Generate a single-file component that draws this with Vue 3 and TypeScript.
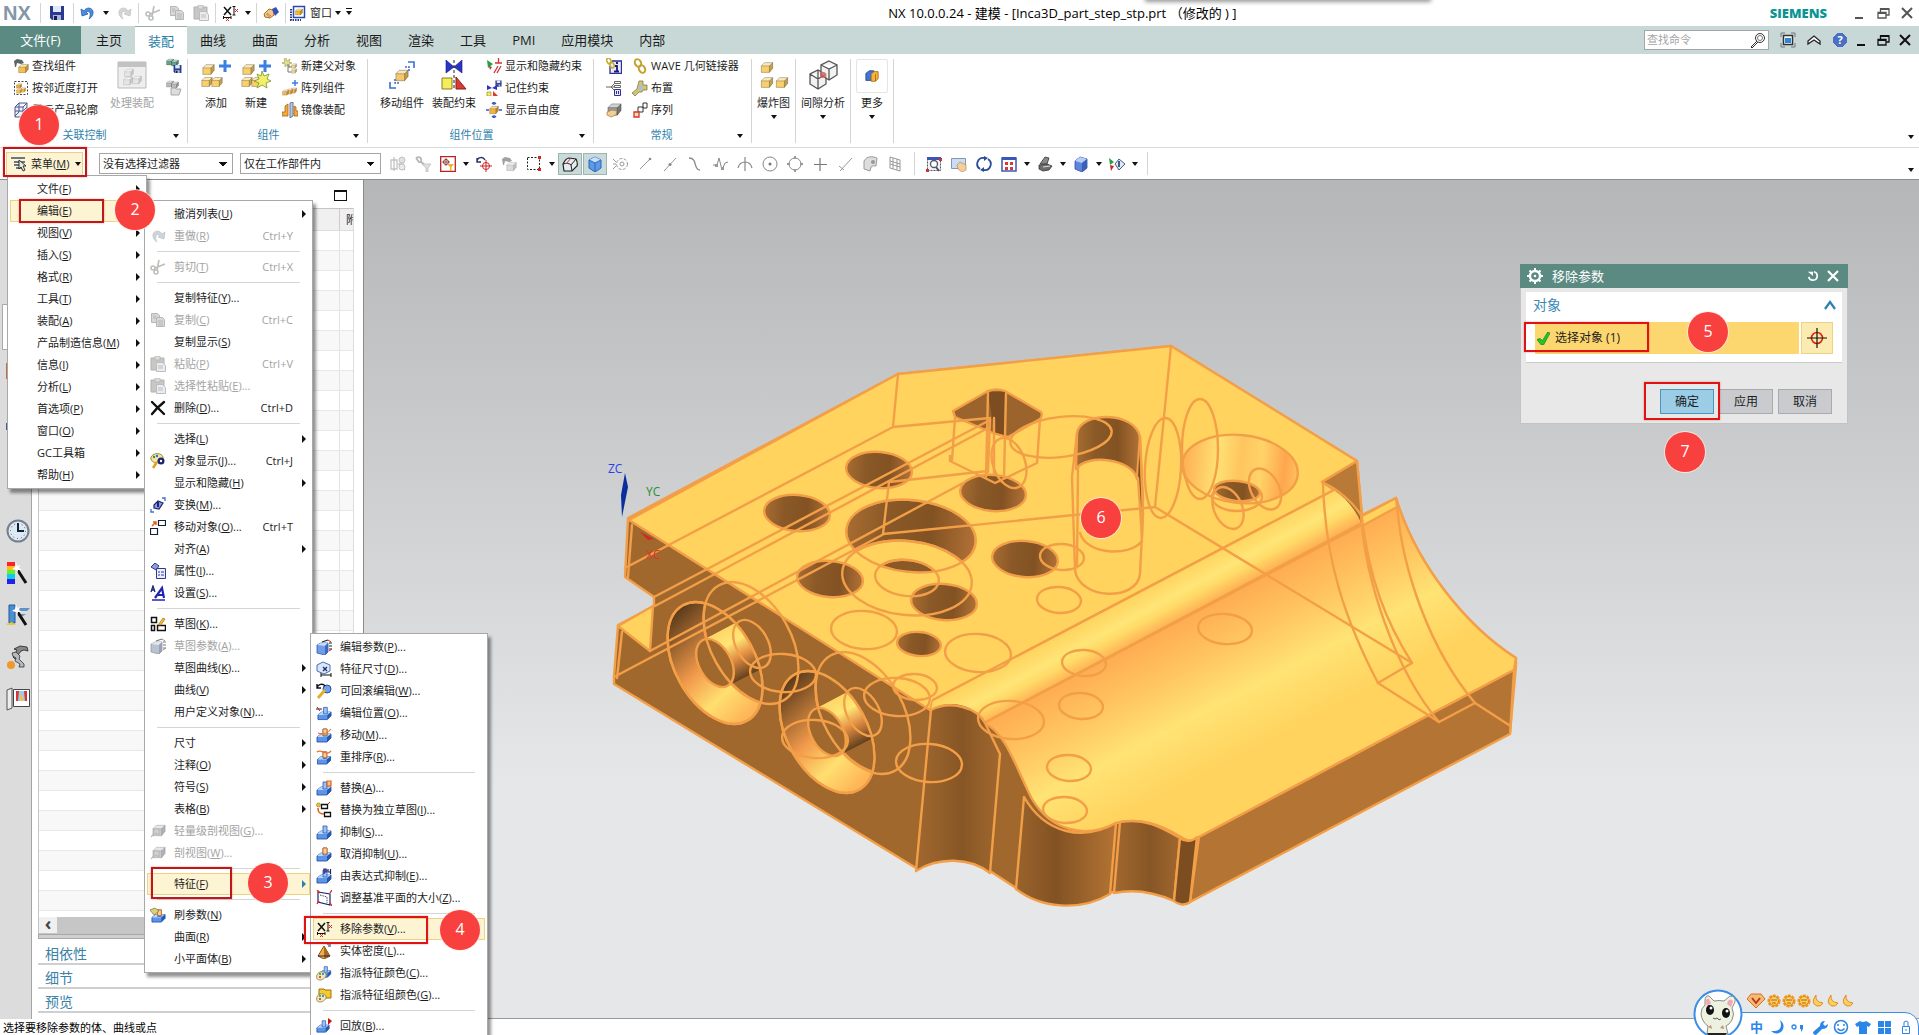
<script setup lang="ts">
interface MenuItem {
  text?: string
  hotkey?: string
  tail?: string
  icon?: string
  keys?: string
  sub?: boolean
  off?: boolean
  active?: boolean
}
interface Ring {
  x: number
  y: number
  rx: number
  ry: number
  a?: number
}

const tabs: string[] = ['主页', '装配', '曲线', '曲面', '分析', '视图', '渲染', '工具', 'PMI', '应用模块', '内部']

const mainMenu: MenuItem[] = [
  { text: '文件', hotkey: 'F', sub: true },
  { text: '编辑', hotkey: 'E', sub: true, active: true },
  { text: '视图', hotkey: 'V', sub: true },
  { text: '插入', hotkey: 'S', sub: true },
  { text: '格式', hotkey: 'R', sub: true },
  { text: '工具', hotkey: 'T', sub: true },
  { text: '装配', hotkey: 'A', sub: true },
  { text: '产品制造信息', hotkey: 'M', sub: true },
  { text: '信息', hotkey: 'I', sub: true },
  { text: '分析', hotkey: 'L', sub: true },
  { text: '首选项', hotkey: 'P', sub: true },
  { text: '窗口', hotkey: 'O', sub: true },
  { text: 'GC工具箱', sub: true },
  { text: '帮助', hotkey: 'H', sub: true },
]

const editMenu: MenuItem[] = [
  { text: '撤消列表', hotkey: 'U', sub: true },
  { text: '重做', hotkey: 'R', keys: 'Ctrl+Y', icon: 'redo', off: true },
  {},
  { text: '剪切', hotkey: 'T', keys: 'Ctrl+X', icon: 'cut', off: true },
  {},
  { text: '复制特征', hotkey: 'Y', tail: '...' },
  { text: '复制', hotkey: 'C', keys: 'Ctrl+C', icon: 'copy', off: true },
  { text: '复制显示', hotkey: 'S' },
  { text: '粘贴', hotkey: 'P', keys: 'Ctrl+V', icon: 'paste', off: true },
  { text: '选择性粘贴', hotkey: 'E', tail: '...', icon: 'paste', off: true },
  { text: '删除', hotkey: 'D', tail: '...', keys: 'Ctrl+D', icon: 'delete' },
  {},
  { text: '选择', hotkey: 'L', sub: true },
  { text: '对象显示', hotkey: 'J', tail: '...', keys: 'Ctrl+J', icon: 'palette' },
  { text: '显示和隐藏', hotkey: 'H', sub: true },
  { text: '变换', hotkey: 'M', tail: '...', icon: 'transform' },
  { text: '移动对象', hotkey: 'O', tail: '...', keys: 'Ctrl+T', icon: 'moveobj' },
  { text: '对齐', hotkey: 'A', sub: true },
  { text: '属性', hotkey: 'I', tail: '...', icon: 'props' },
  { text: '设置', hotkey: 'S', tail: '...', icon: 'fonts' },
  {},
  { text: '草图', hotkey: 'K', tail: '...', icon: 'sketch' },
  { text: '草图参数', hotkey: 'A', tail: '...', icon: 'param', off: true },
  { text: '草图曲线', hotkey: 'K', tail: '...', sub: true },
  { text: '曲线', hotkey: 'V', sub: true },
  { text: '用户定义对象', hotkey: 'N', tail: '...' },
  {},
  { text: '尺寸', sub: true },
  { text: '注释', hotkey: 'O', sub: true },
  { text: '符号', hotkey: 'S', sub: true },
  { text: '表格', hotkey: 'B', sub: true },
  { text: '轻量级剖视图', hotkey: 'G', tail: '...', icon: 'section', off: true },
  { text: '剖视图', hotkey: 'W', tail: '...', icon: 'section', off: true },
  {},
  { text: '特征', hotkey: 'F', sub: true, active: true },
  {},
  { text: '刷参数', hotkey: 'N', icon: 'brush' },
  { text: '曲面', hotkey: 'R', sub: true },
  { text: '小平面体', hotkey: 'B', sub: true },
]

const featureMenu: MenuItem[] = [
  { text: '编辑参数', hotkey: 'P', tail: '...', icon: 'param' },
  { text: '特征尺寸', hotkey: 'D', tail: '...', icon: 'fdim' },
  { text: '可回滚编辑', hotkey: 'W', tail: '...', icon: 'rollback' },
  { text: '编辑位置', hotkey: 'O', tail: '...', icon: 'fpos' },
  { text: '移动', hotkey: 'M', tail: '...', icon: 'fmove' },
  { text: '重排序', hotkey: 'R', tail: '...', icon: 'freorder' },
  {},
  { text: '替换', hotkey: 'A', tail: '...', icon: 'freplace' },
  { text: '替换为独立草图', hotkey: 'I', tail: '...', icon: 'indep' },
  { text: '抑制', hotkey: 'S', tail: '...', icon: 'fblue' },
  { text: '取消抑制', hotkey: 'U', tail: '...', icon: 'forange' },
  { text: '由表达式抑制', hotkey: 'E', tail: '...', icon: 'fexpr' },
  { text: '调整基准平面的大小', hotkey: 'Z', tail: '...', icon: 'plane' },
  {},
  { text: '移除参数', hotkey: 'V', tail: '...', icon: 'xparam', active: true },
  { text: '实体密度', hotkey: 'L', tail: '...', icon: 'density' },
  { text: '指派特征颜色', hotkey: 'C', tail: '...', icon: 'fcolor' },
  { text: '指派特征组颜色', hotkey: 'G', tail: '...', icon: 'gcolor' },
  {},
  { text: '回放', hotkey: 'B', tail: '...', icon: 'play' },
]

const menus = [
  { name: 'main', label: '菜单', items: mainMenu },
  { name: 'edit', label: '编辑', items: editMenu },
  { name: 'feature', label: '特征', items: featureMenu },
]

const snapTools: string[] = ['snapall', 'line1', 'line2', 'curve', 'spline', 'arcx', 'circdot', 'circ4', 'plus', 'slash', 'facept', 'gridpt']

const badges = [
  { n: 1, x: 39, y: 125 },
  { n: 2, x: 135, y: 210 },
  { n: 3, x: 268, y: 883 },
  { n: 4, x: 460, y: 930 },
]
const frames = [
  { x: 3, y: 147, w: 84, h: 30 },
  { x: 19, y: 199, w: 85, h: 24 },
  { x: 151, y: 867, w: 81, h: 32 },
  { x: 304, y: 916, w: 124, h: 28 },
]

const holes: Ring[] = [
  { x: 879, y: 470, rx: 33, ry: 18, a: 5 },
  { x: 797, y: 513, rx: 33, ry: 18, a: 5 },
  { x: 993, y: 493, rx: 33, ry: 18, a: 5 },
  { x: 830, y: 579, rx: 33, ry: 18, a: 5 },
  { x: 1025, y: 559, rx: 33, ry: 18, a: 5 },
  { x: 944, y: 602, rx: 33, ry: 18, a: 5 },
  { x: 919, y: 644, rx: 22, ry: 12, a: 5 },
]
const rings: Ring[] = [
  { x: 864, y: 630, rx: 33, ry: 19, a: 4 },
  { x: 978, y: 653, rx: 33, ry: 19, a: 4 },
  { x: 1059, y: 600, rx: 22, ry: 13, a: 4 },
  { x: 1062, y: 557, rx: 22, ry: 13, a: 4 },
  { x: 1225, y: 629, rx: 27, ry: 15, a: 5 },
  { x: 1084, y: 663, rx: 22, ry: 13, a: 4 },
  { x: 1081, y: 706, rx: 22, ry: 13, a: 4 },
  { x: 1011, y: 720, rx: 33, ry: 19, a: 4 },
  { x: 1069, y: 768, rx: 22, ry: 13, a: 4 },
  { x: 1065, y: 810, rx: 22, ry: 13, a: 4 },
  { x: 915, y: 687, rx: 22, ry: 13, a: 4 },
  { x: 897, y: 697, rx: 33, ry: 19, a: 4 },
  { x: 929, y: 763, rx: 33, ry: 19, a: 4 },
  { x: 815, y: 739, rx: 33, ry: 19, a: 4 },
  { x: 783, y: 673, rx: 33, ry: 19, a: 4 },
  { x: 907, y: 578, rx: 65, ry: 37, a: 6 },
  { x: 907, y: 578, rx: 32, ry: 18, a: 6 },
  { x: 1061, y: 437, rx: 51, ry: 20, a: -7 },
  { x: 1163, y: 468, rx: 18, ry: 50, a: 3 },
  { x: 1200, y: 449, rx: 18, ry: 50, a: 0 },
  { x: 1228, y: 508, rx: 14, ry: 22, a: -24 },
  { x: 1265, y: 489, rx: 14, ry: 22, a: -28 },
  { x: 1009, y: 463, rx: 16, ry: 26, a: -20 },
  { x: 751, y: 643, rx: 40, ry: 66, a: -29 },
  { x: 863, y: 713, rx: 40, ry: 66, a: -29 },
  { x: 752, y: 644, rx: 16, ry: 26, a: -29 },
  { x: 863, y: 712, rx: 16, ry: 26, a: -29 },
]
const bores = [
  { x: 0, y: 0 },
  { x: 112, y: 69 },
]
</script>

<template>
  <div class="app">
    <svg class="defs" aria-hidden="true">
      <symbol id="cube" viewBox="0 0 16 16"><path d="M1 6l4-4h10v7l-4 5H1z" fill="currentColor" /><path d="M1 6l4-4h10l-4 4z" fill="#fff" opacity=".55" /><path d="M11 6l4-4v7l-4 5z" fill="#000" opacity=".22" /><path d="M1 6l4-4h10v7l-4 5H1zM1 6h10l4-4M11 6v8" fill="none" stroke="#000" stroke-opacity=".3" /></symbol>
      <symbol id="save" viewBox="0 0 16 16"><path d="M1 1h14v14H3l-2-2z" fill="#2b3a8f" /><path d="M4 1h8v6H4z" fill="#dfe9f7" /><path d="M4 10h8v5H4z" fill="#a9b7dd" /><path d="M5 11h3v4H5z" fill="#141c50" /></symbol>
      <symbol id="undo" viewBox="0 0 16 16"><path d="M1 4l1 7 6-2-2-2c3-2 6 1 3 7 5-3 6-10 0-11-2 0-4 1-5 3z" fill="#4b8ede" stroke="#1d4f9c" stroke-width=".7" /></symbol>
      <symbol id="redo" viewBox="0 0 16 16"><path d="M15 4l-1 7-6-2 2-2C7 5 4 8 7 14 2 11 1 4 7 3c2 0 4 1 5 3z" fill="#a9bacb" stroke="#8a9aaa" stroke-width=".7" /></symbol>
      <symbol id="cut" viewBox="0 0 16 16"><g fill="none" stroke="#98937a" stroke-width="1.6"><path d="M9 1L7 11M15 5L5 9" /><circle cx="6" cy="13" r="2" /><circle cx="3" cy="9" r="2" /></g></symbol>
      <symbol id="copy" viewBox="0 0 16 16"><g fill="#b9bfcc" stroke="#808898"><path d="M1.500 1.500h6l2 2v7h-8z" /><path d="M6.500 5.500h6l2 2v7h-8z" /></g><path d="M8 9h5M8 11h5M8 13h5M3 4h3M3 6h3" stroke="#808898" /></symbol>
      <symbol id="paste" viewBox="0 0 16 16"><path d="M1 2h13v12H1z" fill="#a6a295" stroke="#858070" /><path d="M5 0h5v4H5z" fill="#c9c6bd" stroke="#858070" stroke-width=".7" /><path d="M6.500 6.500h6l3 3v6h-9z" fill="#dbe0ea" stroke="#8a93a5" /><path d="M8 10h5M8 12h5" stroke="#8a93a5" /></symbol>
      <symbol id="xparam" viewBox="0 0 16 16"><path d="M2 2l7 8M9 2l-7 8" stroke="#111" stroke-width="1.500" /><path d="M12 1v9M10.500 1.500h3M10.500 10h3M1 12.500h8M1.500 11v3M9 11v3" stroke="#111" fill="none" /><path d="M13 4l3 3M16 4l-3 3M4 13l3 3M7 13l-3 3" stroke="#d22" /></symbol>
      <symbol id="hand" viewBox="0 0 16 16"><path d="M1 9l5-5 4 1 1 5-4 3-5-1z" fill="#f3c98b" stroke="#a86c2a" /><path d="M9 4l4-2 3 5-4 4z" fill="#3a4fb5" /><path d="M3 9l4 3M4 8l4 3" stroke="#a86c2a" stroke-width=".7" /></symbol>
      <symbol id="windows" viewBox="0 0 16 16"><path d="M1 4v11h10" fill="none" stroke="#2b3a8f" stroke-dasharray="1.500 1" stroke-width="2" /><path d="M3.500 1.500h11v11h-11z" fill="#fff" stroke="#2b4ab0" stroke-width="1.500" /><use href="#cube" x="5" y="3" width="8" height="8" color="#f5b82c" /></symbol>
      <symbol id="find" viewBox="0 0 16 16"><use href="#cube" x="5" y="5" width="11" height="11" color="#f5c04c" /><path d="M1 3l3-2 5 1 2 3-3 1-4-1-1 4H2z" fill="#5c6468" /></symbol>
      <symbol id="prox" viewBox="0 0 16 16"><path d="M1.500 1.500h13v13h-13z" fill="none" stroke="#444" stroke-dasharray="2 1.500" /><use href="#cube" x="3" y="3" width="6" height="6" color="#f0a83c" /><use href="#cube" x="7" y="7" width="6" height="6" color="#f5c04c" /><use href="#cube" x="3" y="8" width="6" height="6" color="#f5c04c" /></symbol>
      <symbol id="outline" viewBox="0 0 16 16"><path d="M2 5l4-4h8v9l-4 5H2zM2 5h8l4-4M10 5v10M2 9h8l4-4M6 1v9l-4 4" fill="#dfe3f3" fill-opacity=".6" stroke="#4b5594" /></symbol>
      <symbol id="asm" viewBox="0 0 30 30"><path d="M1 2h28v26H1z" fill="#e4e4e4" stroke="#8b8b8b" /><path d="M1 2h28v5H1z" fill="#9b9b9b" /><use href="#cube" x="7" y="8" width="10" height="10" color="#d5d5d5" /><use href="#cube" x="6" y="16" width="10" height="10" color="#d5d5d5" /><use href="#cube" x="15" y="15" width="10" height="10" color="#d5d5d5" /></symbol>
      <symbol id="asmsave" viewBox="0 0 16 16"><use href="#cube" x="0" y="0" width="8" height="8" color="#62a38f" /><use href="#cube" x="5" y="1" width="8" height="8" color="#62a38f" /><use href="#save" x="7" y="6" width="9" height="10" /></symbol>
      <symbol id="asmopen" viewBox="0 0 16 16"><use href="#cube" x="0" y="0" width="8" height="8" color="#bbb" /><use href="#cube" x="5" y="1" width="8" height="8" color="#bbb" /><path d="M5 15V8h4l1 1h5l-2 6z" fill="#ddd" stroke="#aaa" /></symbol>
      <symbol id="stack" viewBox="0 0 30 30"><g color="#f8cf68"><use href="#cube" x="1" y="3" width="13" height="13" /><use href="#cube" x="0" y="16" width="12" height="12" /><use href="#cube" x="10" y="16" width="12" height="12" /></g></symbol>
      <symbol id="add" viewBox="0 0 30 30"><use href="#stack" width="30" height="30" /><path d="M24 0v12M18 6h12" stroke="#3b7fe0" stroke-width="3" /></symbol>
      <symbol id="new" viewBox="0 0 30 30"><use href="#stack" width="30" height="30" /><path d="M24 0v12M18 6h12" stroke="#3b7fe0" stroke-width="3" /><path d="M21 11l2 5 5-2-2 5 4 2-5 2 1 5-5-3-5 3 2-5-5-2 5-2-2-5 4 2z" fill="#f4ef6a" stroke="#75952a" stroke-width=".8" /></symbol>
      <symbol id="parent" viewBox="0 0 16 16"><path d="M4 0l1 3 3-2-1 3 3 1-3 1 1 3-3-2-2 2V6L0 5l3-1-1-3z" fill="#e3e08c" stroke="#9a9a48" stroke-width=".6" /><path d="M6 6v8h4M6 9h4" fill="none" stroke="#777" /><use href="#cube" x="9" y="5" width="6" height="6" color="#e8d79a" /><use href="#cube" x="9" y="10" width="6" height="6" color="#e8d79a" /></symbol>
      <symbol id="array" viewBox="0 0 16 16"><g color="#f4b65a"><use href="#cube" x="8" y="7" width="7" height="7" /><use href="#cube" x="4" y="8" width="7" height="7" /><use href="#cube" x="0" y="9" width="7" height="7" /></g><path d="M13 0v6M10 3h6" stroke="#3b7fe0" stroke-width="1.500" /></symbol>
      <symbol id="mirror" viewBox="0 0 16 16"><path d="M8 1l3-1v14l-3 2z" fill="#bdc7dd" stroke="#6b7894" /><path d="M0 10h3V4l3-2v12H0zM12 4l2 1v4h2v5h-4z" fill="#f3a93e" stroke="#a4641a" stroke-width=".8" /></symbol>
      <symbol id="movecomp" viewBox="0 0 30 30"><use href="#cube" x="8" y="8" width="14" height="15" color="#f6c86c" /><g fill="none" stroke="#3b6fd0" stroke-width="1.600"><path d="M21 2h6v6M3 22v6h6" /><path d="M18 7h4v4M8 19v4h4" stroke-dasharray="2 1" /></g></symbol>
      <symbol id="constrain" viewBox="0 0 30 30"><path d="M7 0v13l8-6zM23 0v13l-8-6z" fill="#2a35c4" stroke="#111a77" stroke-width=".6" /><path d="M15 0v30" stroke="#222" stroke-dasharray="3 2" /><path d="M3 18h10v11H3z" fill="#f4ee5c" stroke="#8a7d1e" /><path d="M17 29V17l10 12z" fill="#d93a34" stroke="#8c1d19" /></symbol>
      <symbol id="showcon" viewBox="0 0 16 16"><path d="M1 2l6 4-5 4z" fill="#24a148" /><path d="M3 8l1 4 2-3z" fill="#c22" /><path d="M9 5h7M12.500 0v5M8 15l4-7M11 15l4-7" stroke="#d2333a" stroke-width="1.300" /></symbol>
      <symbol id="remember" viewBox="0 0 16 16"><use href="#save" x="9" y="0" width="7" height="7" /><path d="M1 5v5l5-2zM11 5v5L6 8z" fill="#2a35c4" /><path d="M1 12h4v4H1z" fill="#f4ee5c" stroke="#8a7d1e" stroke-width=".6" /><path d="M7 16v-5l5 5z" fill="#d93a34" /></symbol>
      <symbol id="dof" viewBox="0 0 16 16"><use href="#cube" x="3" y="3" width="10" height="10" color="#f6b23c" /><path d="M8 0v3M8 13v3M0 8h3M13 8h3M6 2l2-2 2 2M6 14l2 2 2-2" stroke="#2f5bbf" fill="none" stroke-width="1.300" /></symbol>
      <symbol id="info" viewBox="0 0 16 16"><path d="M6 3h9.500v12.500H4V8" fill="#e8eafb" stroke="#2f2f8f" stroke-width="1.300" /><path d="M9 8h2v5M8 13.500h5M10 5h2" stroke="#1a1a80" stroke-width="1.800" fill="none" /><g fill="none" stroke="#c9a92c" stroke-width="1.500"><ellipse cx="3" cy="3" rx="2" ry="3" transform="rotate(-25 3 3)" /><ellipse cx="6" cy="7" rx="2" ry="3" transform="rotate(-25 6 7)" /></g></symbol>
      <symbol id="tree" viewBox="0 0 16 16"><path d="M0 7h5l4-4M5 7h4M5 7l4 4" fill="none" stroke="#666" /><path d="M8.500 1.500h6v2h-6zM8.500 5.500h6v2h-6z" fill="#fff" stroke="#666" /><path d="M8.500 9.500h6v6h-6z" fill="#e8eafb" stroke="#2f2f8f" /><path d="M10.500 11v3M12.500 11v3" stroke="#2f2f8f" /></symbol>
      <symbol id="graybox" viewBox="0 0 16 16"><use href="#cube" x="1" y="0" width="15" height="15" color="#9a9a9a" /><path d="M1 10l5-2 5 1-1 4-5 2-4-2z" fill="#f0cf97" stroke="#a8793c" stroke-width=".7" /></symbol>
      <symbol id="link" viewBox="0 0 16 16"><g fill="none" stroke="#c4a12e" stroke-width="2"><ellipse cx="6" cy="5" rx="3" ry="4" transform="rotate(-25 6 5)" /><ellipse cx="10" cy="11" rx="3" ry="4" transform="rotate(-25 10 11)" /></g></symbol>
      <symbol id="arrange" viewBox="0 0 16 16"><path d="M7 1h4v4h4v5h-4l-1 2H7L3 16l-3-3 5-4z" fill="#cfc47a" stroke="#857c3c" stroke-width=".8" /><path d="M7 5h4v5H7z" fill="#a8bfe0" opacity=".8" /></symbol>
      <symbol id="seq" viewBox="0 0 16 16"><path d="M11 1h4v5h-4zM6 5h5v5H6z" fill="#fff" stroke="#333" /><path d="M2 10h5v5H2z" fill="#fbe4a0" stroke="#d2333a" stroke-width="1.300" /></symbol>
      <symbol id="explode" viewBox="0 0 30 30"><g color="#f8cf68"><use href="#cube" x="1" y="1" width="14" height="13" /><use href="#cube" x="1" y="16" width="14" height="13" /><use href="#cube" x="16" y="16" width="14" height="13" /></g></symbol>
      <symbol id="clear" viewBox="0 0 30 30"><path d="M10 10l8 4v10l-8 5-8-5V14zM2 14l8 5 8-5M10 19v10M10 10v9" fill="#f2f2f2" stroke="#555" stroke-width="1.300" /><path d="M21 1l8 4v10l-8 5-8-5V5zM13 5l8 4 8-4M21 9v11" fill="#ececec" fill-opacity=".7" stroke="#555" stroke-width="1.300" /><circle cx="15" cy="15" r="3" fill="#d9534f" opacity=".75" /></symbol>
      <symbol id="more" viewBox="0 0 16 16"><path d="M1 5l4-3h5v11H1z" fill="#3f74cf" stroke="#244c9c" /><path d="M7 6l3-3h5v8l-3 3H7z" fill="#f6b23c" stroke="#a96d16" /><path d="M12 6v8" stroke="#a96d16" /></symbol>
      <symbol id="menuico" viewBox="0 0 16 16"><path d="M0 2h14M3 6h11M3 9h8M5 12h6" stroke="#3d4d63" stroke-width="1.600" /><path d="M8 4v9l2-2 2 4 2-1-2-4h3z" fill="#e8e8e8" stroke="#222" stroke-width=".9" /></symbol>
      <symbol id="selfunnel" viewBox="0 0 16 16"><path d="M1 2c4-2 6 0 5 4l3 2M1 2l3 4 2 0" fill="none" stroke="#888" stroke-width="1.800" /><path d="M7 8h9l-3 4v4h-2v-4z" fill="#ccc" stroke="#888" stroke-width=".7" /></symbol>
      <symbol id="selcomp" viewBox="0 0 16 16"><path d="M1 4h6v9H1zM4 1v14M9 9l6 5M8 8h6" fill="none" stroke="#9a9a9a" stroke-width="1.300" /><circle cx="12" cy="4" r="3" fill="#ccc" stroke="#999" /><circle cx="12" cy="11" r="3" fill="#ddd" stroke="#999" /></symbol>
      <symbol id="selprio" viewBox="0 0 16 16"><path d="M.7.700h14.600v14.600H.700z" fill="#fff" stroke="#b22" stroke-width="1.300" /><circle cx="6" cy="6" r="2.500" fill="none" stroke="#833" /><path d="M6 2v8M2 6h8" stroke="#833" stroke-width=".8" /><path d="M7 8h7l-2.500 3v4h-1.500v-4z" fill="#f0b02c" /></symbol>
      <symbol id="selrot" viewBox="0 0 16 16"><path d="M1 6c0-5 6-6 8-2M1 2v4h4" fill="none" stroke="#26346b" stroke-width="1.400" /><circle cx="10" cy="10" r="3.500" fill="none" stroke="#c22" /><path d="M10 4v12M4 10h12" stroke="#c22" /></symbol>
      <symbol id="dash" viewBox="0 0 16 16"><path d="M1.500 1.500h12v12h-12z" fill="none" stroke="#222" stroke-dasharray="2 1.500" /><path d="M12 12h3v3h-3zM12 0h3v3h-3z" fill="#d22" /></symbol>
      <symbol id="hidecube" viewBox="0 0 16 16"><path d="M1 8c2-4 4-6 6-6l7 1q2 4 1 7l-5 5H2z" fill="#e6edf2" stroke="#222" stroke-width="1.200" /><path d="M1 8c3-1 6-1 8 1l5-6M9 9l1 6" fill="none" stroke="#222" /><path d="M4 8l5-6" stroke="#c33" /></symbol>
      <symbol id="bluecube" viewBox="0 0 16 16"><path d="M2 4l6-3 6 3v8l-6 4-6-4z" fill="#5b9bea" stroke="#2f66b8" /><path d="M2 4l6 3 6-3-6-3z" fill="#c7dffa" /><path d="M8 7v9M2 4l6 3 6-3" stroke="#2f66b8" fill="none" /></symbol>
      <symbol id="snapall" viewBox="0 0 16 16"><g fill="none" stroke="#999"><path d="M1 3l3 3M1 13l3-3M1 8h3" /><circle cx="10" cy="8" r="5.500" stroke-dasharray="3 1.500" /><circle cx="10" cy="8" r="2" /></g></symbol>
      <symbol id="line1" viewBox="0 0 16 16"><path d="M3 13L13 3" stroke="#999" /><circle cx="13" cy="3" r="1.300" fill="#888" /></symbol>
      <symbol id="line2" viewBox="0 0 16 16"><path d="M2 15L14 2" stroke="#999" /><circle cx="8" cy="8.500" r="1.500" fill="#888" /></symbol>
      <symbol id="curve" viewBox="0 0 16 16"><path d="M2 2c9 0 4 12 11 12" fill="none" stroke="#888" stroke-width="1.300" /></symbol>
      <symbol id="spline" viewBox="0 0 16 16"><path d="M1 9h4L7 2l3 12 3-7 3-1" fill="none" stroke="#888" /><path d="M3 8h3v3H3zM9 11h3v3H9z" fill="#999" /></symbol>
      <symbol id="arcx" viewBox="0 0 16 16"><path d="M1 12C3 4 13 4 15 12M8 1v14" fill="none" stroke="#888" stroke-width="1.200" /></symbol>
      <symbol id="circdot" viewBox="0 0 16 16"><circle cx="8" cy="8" r="7" fill="none" stroke="#888" /><circle cx="8" cy="8" r="1.500" fill="#777" /></symbol>
      <symbol id="circ4" viewBox="0 0 16 16"><circle cx="8" cy="8" r="6" fill="none" stroke="#888" /><path d="M7 0h2v3H7zM7 13h2v3H7zM0 7h3v2H0zM13 7h3v2h-3z" fill="#999" /></symbol>
      <symbol id="plus" viewBox="0 0 16 16"><path d="M8 2v13M2 8.500h13" stroke="#777" stroke-width="1.200" /></symbol>
      <symbol id="slash" viewBox="0 0 16 16"><path d="M3 15L15 2M2 10l5 4" stroke="#999" /></symbol>
      <symbol id="facept" viewBox="0 0 16 16"><path d="M2 5c3-5 8-5 13-3l-1 8q-3-1-5 1l-1 4-6-2z" fill="#ddd" stroke="#999" /><circle cx="11" cy="6" r="2" fill="#999" /></symbol>
      <symbol id="gridpt" viewBox="0 0 16 16"><path d="M3 1l10 3v11L3 12zM3 5l10 3M3 8l10 3M6 2v11M10 3v11" fill="none" stroke="#999" /></symbol>
      <symbol id="fit" viewBox="0 0 16 16"><path d="M1.500 2.500h13v12h-13z" fill="#eef3fb" stroke="#555" stroke-dasharray="2 1" /><path d="M1 1h14v3H1z" fill="#3b57b5" /><circle cx="8" cy="8" r="3.500" fill="#fff" stroke="#556" stroke-width="1.300" /><path d="M10 11l3 4" stroke="#556" stroke-width="2" /><path d="M13 2h3v3h-3zM0 13h3v3H0z" fill="#c33" /></symbol>
      <symbol id="pan" viewBox="0 0 16 16"><path d="M.500 2.500h14v10H.500z" fill="#cbdcf5" stroke="#8894b0" /><path d="M6 9l3-3 6 3v5l-4 2-4-3z" fill="#f3cf9b" stroke="#b98a4a" stroke-width=".7" /></symbol>
      <symbol id="rotate" viewBox="0 0 16 16"><path d="M4 13A6 6 0 018 2M12 3a6 6 0 01-4 11" fill="none" stroke="#2c4d96" stroke-width="1.800" /><path d="M8 0l4 2-4 3zM8 11l-4 3 4 2z" fill="#2c4d96" /></symbol>
      <symbol id="layout" viewBox="0 0 16 16"><path d="M1 2h14v13H1z" fill="#fff" stroke="#3b57b5" stroke-width="1.500" /><path d="M1 1h14v3H1z" fill="#3b57b5" /><path d="M4 6h3v3H4zM9 6h3v3H9zM4 11h3v3H4zM9 11h3v3H9z" fill="#d43a34" /></symbol>
      <symbol id="orient" viewBox="0 0 16 16"><path d="M3 8l5-7 4 1-2 6z" fill="#8b8b8b" stroke="#333" stroke-width=".8" /><path d="M2 9l8-1 5 2-3 4-6 1-4-2z" fill="#6d6d6d" stroke="#333" stroke-width=".8" /><path d="M6 11l7-1" stroke="#ddd" /></symbol>
      <symbol id="style" viewBox="0 0 16 16"><path d="M2 5l5-4 7 2v9l-5 4-7-3z" fill="#5c86dd" stroke="#2f4fa5" stroke-width=".8" /><path d="M2 5l5-4 7 2-5 4z" fill="#b7cdf6" /><path d="M9 7l5-4v9l-5 4z" fill="#3c5fb8" /></symbol>
      <symbol id="edgeview" viewBox="0 0 16 16"><path d="M0 2l5 4-4 3z" fill="#24a148" /><path d="M1 9l4 1-3 5z" fill="#c22" /><path d="M6 8l4-5 6 5-6 6z" fill="#dfe8f3" stroke="#445a88" /><path d="M10 5v6" stroke="#445a88" stroke-width="2" /></symbol>
      <symbol id="delete" viewBox="0 0 16 16"><path d="M2 2c4 4 8 8 12 12M14 2C9 6 6 9 2 14" stroke="#111" stroke-width="2.400" stroke-linecap="round" fill="none" /></symbol>
      <symbol id="palette" viewBox="0 0 16 16"><path d="M1 4c3-5 11-4 12 0s-4 3-5 4-1 3-3 2-5-3-4-6z" fill="#f6e4a0" stroke="#8c6b1e" stroke-width=".8" /><circle cx="4" cy="4" r="1.200" fill="#2a9a4a" /><circle cx="7" cy="3" r="1.200" fill="#2f6be0" /><circle cx="11" cy="8" r="3.500" fill="#1c2470" /><circle cx="11" cy="8" r="1.200" fill="#fff" /><path d="M3 15l4-6" stroke="#e0a020" stroke-width="2.500" /></symbol>
      <symbol id="transform" viewBox="0 0 16 16"><path d="M4 8l4-4 5 2-4 6-5-1z" fill="#8f9ed8" stroke="#1c2470" stroke-width="1.200" /><path d="M8 5v5" stroke="#1c2470" stroke-width="2" /><path d="M12 1h3v3M1 12v3h3" fill="none" stroke="#3b6fd0" stroke-width="1.300" /></symbol>
      <symbol id="moveobj" viewBox="0 0 16 16"><path d="M8.500 1.500h7v5h-7zM.500 9.500h7v6h-7z" fill="#fff" stroke="#123" stroke-width="1.200" /><path d="M2 7l4-4M3 3h3v3" stroke="#e0601c" stroke-width="1.500" fill="none" /></symbol>
      <symbol id="props" viewBox="0 0 16 16"><path d="M1 4l4-4 4 3-3 4z" fill="#8f9ed8" stroke="#2a3a8f" /><path d="M6.500 5.500h9v10h-9z" fill="#eef" stroke="#2a3a8f" /><path d="M8 9h2M11 9h3M8 12h2M11 12h3" stroke="#2a3a8f" /></symbol>
      <symbol id="fonts" viewBox="0 0 16 16"><path d="M1 7l2-6 2 6M1.500 5h3" fill="none" stroke="#1c2470" stroke-width="1.300" /><path d="M5 13l7-10 2 10M8 10h5" fill="none" stroke="#2024b0" stroke-width="2.200" /><path d="M2 15h13" stroke="#2024b0" stroke-width="1.500" /></symbol>
      <symbol id="sketch" viewBox="0 0 16 16"><path d="M1.500 1.500h5v5h-5zM1.500 9.500h3v5h-3zM7.500 9.500h8v5h-8z" fill="none" stroke="#111" stroke-width="1.500" /><path d="M8 9l5-7 2 1-4 6z" fill="#f0c02c" stroke="#9a5a10" stroke-width=".6" /></symbol>
      <symbol id="param" viewBox="0 0 16 16"><path d="M1 6l4-2h7v9l-3 3-8-2z" fill="#6f9de8" stroke="#2a58b0" stroke-width=".8" /><path d="M1 6l4-2h7l-3 3z" fill="#c4dafa" /><path d="M9 7l3-3v9l-3 3z" fill="#3b69c4" /><path d="M6 3l6-2M13 4h3M13 7h3M13 10h3" stroke="#222" stroke-width="1.200" /><path d="M12 1l3 2M13 12l3-2" stroke="#d22" /></symbol>
      <symbol id="section" viewBox="0 0 16 16"><use href="#cube" x="2" y="0" width="14" height="15" color="#a3a7ae" /><path d="M1 14l5-4 3 2V6H4v4z" fill="#b9b49c" stroke="#8c8870" /></symbol>
      <symbol id="fblue" viewBox="0 0 16 16"><path d="M1 10l4-3h10v4l-4 4H1z" fill="#5b95ea" stroke="#1d449c" stroke-width=".8" /><path d="M1 10l4-3h10l-4 3z" fill="#b9d5f9" /><path d="M11 10l4-3v4l-4 4z" fill="#2657b4" /><path d="M7 2h4v7H7z" fill="#9bc2f5" stroke="#2a58b0" stroke-width=".8" /></symbol>
      <symbol id="forange" viewBox="0 0 16 16"><use href="#fblue" width="16" height="16" /><path d="M7 2h4v6H7z" fill="#f9d0a0" stroke="#d8701e" stroke-width="1" /></symbol>
      <symbol id="brush" viewBox="0 0 16 16"><use href="#forange" x="1" y="1" width="15" height="15" /><path d="M0 3l5-2 4 3-5 4z" fill="#d8d27a" stroke="#77702a" stroke-width=".7" /></symbol>
      <symbol id="fdim" viewBox="0 0 16 16"><path d="M1 4l6-3 7 3v6l-6 3-7-3z" fill="#d8e6fa" stroke="#4a6fb8" /><path d="M7 6l4 4M11 6l-4 4" stroke="#1c2c60" stroke-width="1.200" /><path d="M5 14h10M5 12v4M15 12v4" stroke="#111" /></symbol>
      <symbol id="rollback" viewBox="0 0 16 16"><circle cx="11" cy="6" r="4" fill="#6fa0ea" stroke="#234f9f" /><path d="M2 15l7-8" stroke="#e0b02c" stroke-width="3" /><path d="M1 5c1-4 6-5 8-2M1 1v4h4" fill="none" stroke="#112" stroke-width="1.400" /></symbol>
      <symbol id="fpos" viewBox="0 0 16 16"><use href="#fblue" x="1" width="15" height="16" /><path d="M0 4h6" stroke="#222" /><path d="M1 2l3 4" stroke="#c22" /></symbol>
      <symbol id="fmove" viewBox="0 0 16 16"><use href="#forange" width="16" height="16" /><path d="M2 6c5 2 9 1 13-4" fill="none" stroke="#e8762a" stroke-width="1.200" /></symbol>
      <symbol id="freorder" viewBox="0 0 16 16"><use href="#forange" y="1" width="16" height="15" /><path d="M1 3c4-4 9 5 14-1" fill="none" stroke="#e8762a" stroke-width="1.400" /></symbol>
      <symbol id="freplace" viewBox="0 0 16 16"><use href="#fblue" width="16" height="16" /><path d="M11 1h4v5h-4z" fill="#f8c08a" stroke="#e0601c" stroke-width="1.200" /></symbol>
      <symbol id="indep" viewBox="0 0 16 16"><path d="M5.500 2.500h6v4h-6zM8.500 10.500h6v4h-6z" fill="#fff" stroke="#111" stroke-width="1.300" /><circle cx="2.500" cy="3" r="2" fill="#e8c83c" stroke="#8a701a" stroke-width=".6" /><path d="M2 6c0 5 2 6 6 6" fill="none" stroke="#e0601c" stroke-width="1.600" /><path d="M12 2l2-2" stroke="#c22" /></symbol>
      <symbol id="fexpr" viewBox="0 0 16 16"><use href="#fblue" width="16" height="16" /><path d="M8 6V1h2v3H8M12 1v3h3M14.500 1v5" fill="none" stroke="#1c2470" stroke-width="1.200" /></symbol>
      <symbol id="plane" viewBox="0 0 16 16"><path d="M2 2l12 2v11L2 12z" fill="#fff" stroke="#1c2470" stroke-width="1.200" /><path d="M4 5l7 2v6" fill="none" stroke="#444" stroke-dasharray="1.500 1" /><path d="M1 0l3 3M14 13l2 3M14 3l2-3M1 14l2-3" stroke="#d22" stroke-width="1.300" /></symbol>
      <symbol id="density" viewBox="0 0 16 16"><path d="M2 13l6-10 6 10-6 3z" fill="#f4b23c" stroke="#8c5310" /><path d="M8 3v13l6-3z" fill="#a86b1e" /><path d="M11 1h4M12 3h3M2 13h12" stroke="#1c2470" /></symbol>
      <symbol id="fcolor" viewBox="0 0 16 16"><use href="#fblue" x="2" y="0" width="14" height="13" /><path d="M1 10c1-4 8-4 9-1s-3 6-6 6-4-2-3-5z" fill="#efe8bb" stroke="#777030" stroke-width=".7" /><circle cx="4" cy="9" r="1" fill="#2a2" /><circle cx="7" cy="9" r="1" fill="#26d" /><circle cx="4" cy="12" r="1" fill="#d22" /></symbol>
      <symbol id="gcolor" viewBox="0 0 16 16"><path d="M3 2h5l1 1h6v8H3z" fill="#f8c92c" stroke="#9a7412" /><path d="M1 10c1-4 8-4 9-1s-3 6-6 6-4-2-3-5z" fill="#efe8bb" stroke="#777030" stroke-width=".7" /><circle cx="4" cy="9" r="1" fill="#2a2" /><circle cx="7" cy="9" r="1" fill="#26d" /><circle cx="4" cy="12" r="1" fill="#d22" /></symbol>
      <symbol id="play" viewBox="0 0 16 16"><use href="#fblue" width="14" height="16" /><path d="M12 0l4 3-4 4z" fill="#c11" /></symbol>
      <symbol id="restore" viewBox="0 0 13 11"><path d="M3.500 4V1h8.500v6H9M1 4.500h8V10H1z" fill="none" stroke="currentColor" stroke-width="1.300" /><path d="M3 1h9M1 5h8" stroke="currentColor" stroke-width="2" /></symbol>
      <symbol id="close" viewBox="0 0 12 12"><path d="M1 1l10 10M11 1L1 11" stroke="currentColor" stroke-width="2" /></symbol>
    </svg>

    <header class="title">
      <span class="nx">NX</span><i class="sep"></i>
      <button class="ib wide" aria-label="保存"><svg><use href="#save" /></svg></button><i class="sep"></i>
      <button class="ib" aria-label="撤消"><svg><use href="#undo" /></svg></button><i class="tri"></i>
      <button class="ib" aria-label="重做"><svg class="dim"><use href="#redo" /></svg></button><i class="sep"></i>
      <button class="ib" aria-label="剪切"><svg class="dim"><use href="#cut" /></svg></button>
      <button class="ib" aria-label="复制"><svg class="dim"><use href="#copy" /></svg></button>
      <button class="ib" aria-label="粘贴"><svg class="dim"><use href="#paste" /></svg></button><i class="sep"></i>
      <button class="ib" aria-label="移除参数"><svg><use href="#xparam" /></svg></button><i class="tri"></i><i class="sep"></i>
      <button class="ib" aria-label="命令查找"><svg><use href="#hand" /></svg></button><i class="sep"></i>
      <button class="winbtn"><svg><use href="#windows" /></svg>窗口<i class="tri"></i></button><i class="tri bar"></i>
      <h1>NX 10.0.0.24 - 建模 - [Inca3D_part_step_stp.prt （修改的 ) ]</h1>
      <span class="brand">SIEMENS</span>
      <div class="winctl gray">
        <button aria-label="最小化"><i class="min"></i></button>
        <button aria-label="还原"><svg class="rs"><use href="#restore" /></svg></button>
        <button aria-label="关闭"><svg class="cl"><use href="#close" /></svg></button>
      </div>
    </header>
    <div class="peek"></div>

    <nav class="tabs">
      <button class="file">文件(F)</button>
      <button v-for="t in tabs" :key="t" class="tab" :class="{ on: t === '装配' }">{{ t }}</button>
      <div class="search">
        <input type="text" placeholder="查找命令" aria-label="查找命令" />
        <svg viewBox="0 0 16 16"><circle cx="10" cy="6" r="4.500" fill="#fff" stroke="#333" /><circle cx="10" cy="6" r="2.500" fill="none" stroke="#777" /><path d="M7 9l-6 6 1 1 6-6" fill="#fff" stroke="#333" /></svg>
      </div>
      <button class="ib" aria-label="全屏"><svg viewBox="0 0 16 16"><path d="M1 5V1h4M11 1h4v4M15 11v4h-4M5 15H1v-4" fill="none" stroke="#777" /><path d="M3.500 3.500h9v9h-9z" fill="#fff" stroke="#333" stroke-width="1.500" /><path d="M5 6h6v5H5z" fill="#2f86d8" /></svg></button>
      <button class="ib" aria-label="折叠功能区"><svg viewBox="0 0 16 16"><path d="M2 9l6-5 6 5v3L8 8l-6 4z" fill="#fff" stroke="#222" stroke-width="1.300" /></svg></button>
      <button class="ib help" aria-label="帮助">?</button>
      <div class="winctl">
        <button aria-label="最小化窗口"><i class="min"></i></button>
        <button aria-label="还原窗口"><svg class="rs"><use href="#restore" /></svg></button>
        <button aria-label="关闭窗口"><svg class="cl"><use href="#close" /></svg></button>
      </div>
    </nav>

    <section class="ribbon">
      <div class="group g1">
        <div class="body">
          <div class="rows">
            <button><svg><use href="#find" /></svg>查找组件</button>
            <button><svg><use href="#prox" /></svg>按邻近度打开</button>
            <button><svg><use href="#outline" /></svg>显示产品轮廓</button>
          </div>
          <button class="big off"><svg class="dim"><use href="#asm" /></svg>处理装配</button>
          <div class="rows">
            <button aria-label="保存组件"><svg><use href="#asmsave" /></svg></button>
            <button aria-label="打开组件"><svg><use href="#asmopen" /></svg></button>
          </div>
        </div>
        <div class="cap">关联控制<i class="tri"></i></div>
      </div>
      <div class="group g2">
        <div class="body">
          <button class="big"><svg><use href="#add" /></svg>添加</button>
          <button class="big"><svg><use href="#new" /></svg>新建</button>
          <div class="rows">
            <button><svg><use href="#parent" /></svg>新建父对象</button>
            <button><svg><use href="#array" /></svg>阵列组件</button>
            <button><svg><use href="#mirror" /></svg>镜像装配</button>
          </div>
        </div>
        <div class="cap">组件<i class="tri"></i></div>
      </div>
      <div class="group g3">
        <div class="body">
          <button class="big"><svg><use href="#movecomp" /></svg>移动组件</button>
          <button class="big"><svg><use href="#constrain" /></svg>装配约束</button>
          <div class="rows">
            <button><svg><use href="#showcon" /></svg>显示和隐藏约束</button>
            <button><svg><use href="#remember" /></svg>记住约束</button>
            <button><svg><use href="#dof" /></svg>显示自由度</button>
          </div>
        </div>
        <div class="cap">组件位置<i class="tri"></i></div>
      </div>
      <div class="group g4">
        <div class="body">
          <div class="rows">
            <button aria-label="信息"><svg><use href="#info" /></svg></button>
            <button aria-label="关系浏览器"><svg><use href="#tree" /></svg></button>
            <button aria-label="产品接口"><svg><use href="#graybox" /></svg></button>
          </div>
          <div class="rows">
            <button><svg><use href="#link" /></svg>WAVE 几何链接器</button>
            <button><svg><use href="#arrange" /></svg>布置</button>
            <button><svg><use href="#seq" /></svg>序列</button>
          </div>
        </div>
        <div class="cap">常规<i class="tri"></i></div>
      </div>
      <div class="group g5"><button class="big"><svg><use href="#explode" /></svg>爆炸图<i class="tri"></i></button></div>
      <div class="group g6"><button class="big"><svg><use href="#clear" /></svg>间隙分析<i class="tri"></i></button></div>
      <div class="group g7"><button class="big more"><span><svg><use href="#more" /></svg></span>更多<i class="tri"></i></button></div>
      <i class="tri end"></i>
    </section>

    <section class="tools">
      <button class="menubtn"><svg><use href="#menuico" /></svg><span>菜单(<u>M</u>)</span><i class="tri"></i></button>
      <select class="s1" aria-label="选择过滤器"><option>没有选择过滤器</option></select>
      <select class="s2" aria-label="选择范围"><option>仅在工作部件内</option></select>
      <button class="ib" aria-label="选择组件"><svg class="dim"><use href="#selcomp" /></svg></button>
      <button class="ib" aria-label="重置过滤器"><svg class="dim"><use href="#selfunnel" /></svg></button>
      <button class="ib" aria-label="选择优先级"><svg><use href="#selprio" /></svg></button><i class="tri"></i>
      <button class="ib" aria-label="恢复选择"><svg><use href="#selrot" /></svg></button>
      <button class="ib" aria-label="查找组件"><svg class="dim"><use href="#find" /></svg></button>
      <button class="ib" aria-label="矩形选择"><svg><use href="#dash" /></svg></button><i class="tri"></i>
      <button class="ib press" aria-label="隐藏边选择"><svg><use href="#hidecube" /></svg></button>
      <button class="ib press" aria-label="高亮显示"><svg><use href="#bluecube" /></svg></button>
      <button v-for="s in snapTools" :key="s" class="ib" :aria-label="s"><svg><use :href="'#' + s" /></svg></button>
      <i class="sep"></i>
      <button class="ib" aria-label="适合窗口"><svg><use href="#fit" /></svg></button>
      <button class="ib" aria-label="平移"><svg><use href="#pan" /></svg></button>
      <button class="ib" aria-label="旋转"><svg><use href="#rotate" /></svg></button>
      <button class="ib" aria-label="布局"><svg><use href="#layout" /></svg></button><i class="tri"></i>
      <button class="ib" aria-label="定向视图"><svg><use href="#orient" /></svg></button><i class="tri"></i>
      <button class="ib" aria-label="渲染样式"><svg><use href="#style" /></svg></button><i class="tri"></i>
      <button class="ib" aria-label="显示边"><svg><use href="#edgeview" /></svg></button><i class="tri"></i>
      <i class="sep"></i>
      <i class="tri end"></i>
    </section>

    <main class="work">
      <aside class="rail">
        <i class="railtab"></i><i class="sliver o"></i><i class="sliver b"></i>
        <div class="railicons">
          <button aria-label="历史记录"><svg viewBox="0 0 24 24"><circle cx="12" cy="12" r="10.500" fill="#dfe9f4" stroke="#76808c" stroke-width="2" /><circle cx="12" cy="12" r="7.500" fill="none" stroke="#456" stroke-dasharray="1 2.900" /><path d="M12 4v8h6" fill="none" stroke="#123" stroke-width="2" /></svg></button>
          <button aria-label="系统材料"><svg viewBox="0 0 24 24"><path d="M1 1h8v4H1z" fill="#f22" /><path d="M1 5h8v4H1z" fill="#fb2" /><path d="M1 9h8v4H1z" fill="#6e3" /><path d="M1 13h8v5H1z" fill="#1cd" /><path d="M1 18h8v5H1z" fill="#22e" /><path d="M11 8l9 14" stroke="#111" stroke-width="3" /><path d="M10 1l1 4 3-1-1 3 3 2-4 0-1 4-1-4-4-1 3-2z" fill="#fff" /></svg></button>
          <button aria-label="Process Studio"><svg viewBox="0 0 24 24"><path d="M3 2h6v18H3z" fill="#4a90d0" stroke="#1d5a9c" /><path d="M12 5h12l-3 3h-9zM12 11h8l-3 2h-5z" fill="#5f94c8" /><path d="M11 8l9 14" stroke="#111" stroke-width="3" /><path d="M10 1l1 4 3-1-1 3 3 2-4 0-1 4-1-4-4-1 3-2z" fill="#fff" /><path d="M0 21l3-1 3-1 4 3H1z" fill="#e8c83c" /></svg></button>
          <button aria-label="加工向导"><svg viewBox="0 0 24 24"><path d="M8 4l6-3 7 1 1 4-4-1-3 1-6 8-2-2 4-7z" fill="#888" stroke="#222" stroke-width=".8" /><path d="M6 8q0 4 4 5l-1 3 5 3-1 3h5v-3l-5-5 1-3-4-4z" fill="#b5bac2" stroke="#333" stroke-width=".8" /><circle cx="5" cy="20" r="4" fill="#f09a2c" /></svg></button>
          <button aria-label="角色"><svg viewBox="0 0 24 24"><path d="M1 3l5-2v20l-5 2z" fill="#eee" stroke="#555" /><path d="M7.500 2.500h16v17h-16z" fill="#fff" stroke="#444" /><path d="M10 4h11v10H10z" fill="#d33" /><path d="M13 4h5l1 10h-7z" fill="#8fd0f4" /><path d="M14 8h3v6h-3z" fill="#f3c04c" /></svg></button>
        </div>
      </aside>
      <section class="nav">
        <div class="navtop"><i class="pin"></i></div>
        <div class="grid"><div class="ghead"><span>附</span></div><div class="grows"></div><div class="hscroll"><b>‹</b><i></i></div></div>
        <div class="split"></div>
        <button class="fold">相依性</button>
        <button class="fold">细节</button>
        <button class="fold">预览</button>
      </section>
      <section class="view">
        <svg class="model" viewBox="600 330 940 600" role="img" aria-label="Inca3D_part_step_stp">
          <defs>
            <linearGradient id="gh"><stop offset="0" stop-color="#a86d32" /><stop offset=".3" stop-color="#8a5927" /><stop offset=".65" stop-color="#835223" /><stop offset="1" stop-color="#b27236" /></linearGradient>
            <linearGradient id="gband" gradientUnits="userSpaceOnUse" x1="1124" y1="600" x2="1145" y2="639"><stop offset="0" stop-color="#ffd35e" /><stop offset=".45" stop-color="#ffe577" /><stop offset=".65" stop-color="#ffdb68" /><stop offset="1" stop-color="#ffaf53" /></linearGradient>
            <linearGradient id="gchan" gradientUnits="userSpaceOnUse" x1="1150" y1="637" x2="1218" y2="767"><stop offset="0" stop-color="#ffad52" /><stop offset=".3" stop-color="#ffc560" /><stop offset=".62" stop-color="#ffe374" /><stop offset="1" stop-color="#ffd35e" /></linearGradient>
            <linearGradient id="gcone"><stop offset="0" stop-color="#ffae54" /><stop offset=".3" stop-color="#ffe173" /><stop offset=".5" stop-color="#ffc55f" /><stop offset=".68" stop-color="#ffd368" /><stop offset=".88" stop-color="#ffa64e" /><stop offset="1" stop-color="#ffc05c" /></linearGradient>
            <linearGradient id="gbore" gradientUnits="userSpaceOnUse" x1="695" y1="602" x2="725" y2="722"><stop offset="0" stop-color="#5b3b1a" /><stop offset=".25" stop-color="#a96c33" /><stop offset=".48" stop-color="#f39b4c" /><stop offset=".75" stop-color="#ffdf70" /><stop offset="1" stop-color="#ffb658" /></linearGradient>
            <linearGradient id="gpin" gradientUnits="userSpaceOnUse" x1="724" y1="628" x2="750" y2="676"><stop offset="0" stop-color="#ffd566" /><stop offset=".3" stop-color="#ffe676" /><stop offset=".6" stop-color="#e28e44" /><stop offset="1" stop-color="#5b3b1a" /></linearGradient>
            <linearGradient id="gcol"><stop offset="0" stop-color="#a1682f" /><stop offset=".55" stop-color="#875625" /><stop offset="1" stop-color="#a1682f" /></linearGradient>
            <linearGradient id="gcol2"><stop offset="0" stop-color="#9a632c" /><stop offset=".4" stop-color="#835223" /><stop offset="1" stop-color="#b47434" /></linearGradient>
            <clipPath id="cbig"><ellipse cx="911" cy="536" rx="65" ry="36" transform="rotate(6 911 536)" /></clipPath>
            <clipPath id="cbore"><ellipse cx="715" cy="663" rx="40" ry="66" transform="rotate(-29 715 663)" /></clipPath>
          </defs>
          <g class="axis">
            <path d="M625 473l3 14-6 30-1-22z" fill="#0a2f9c" />
            <text x="608" y="473" fill="#2a40e8">ZC</text>
            <text x="646" y="496" fill="#2a9030">YC</text>
            <path d="M653 504l-12 7-10 7 14-4z" fill="#2a7030" />
          </g>
          <g stroke="#f39f48" stroke-width="2.400" stroke-linejoin="round" stroke-linecap="round">
            <path d="M628 518L898 374l273-28 186 115 5 54 34-17c20 66 70 128 120 160l0 8-6 67-319 168c-5 5-12 3-17-1-22-10-45-16-64-7-30 18-70 14-94-5l-26-17c-20-18-50-20-74-3L614 684v-8l4-51 36-19v-9l-29-20z" fill="#a1682e" />
            <path d="M618 626l35-20-3 45z" fill="#ffd35e" />
            <path d="M629 520L898 374l273-28 186 115-35 21 12 8-401 210-3 10z" fill="#ffd35e" />
            <path d="M933 700L1334 490c12 8 22 20 28 35L984 723c-8-20-38-24-53-13z" fill="url(#gband)" stroke="none" />
            <path d="M984 723L1396 505l0-7c20 66 70 128 120 160l-2 12-315 167c-5 5-12 4-18 0-20-12-40-20-65-14-30 16-65 8-84-24-15-28-25-66-48-76z" fill="url(#gchan)" />
            <path d="M984 723L1396 507M933 700L1334 490" fill="none" />
            <path d="M1322 482l35-21 5 56c-8-14-24-28-40-35z" fill="#b97a37" />
            <path d="M1362 516l34-18 1 9-35 19z" fill="#ffd35e" />
            <path d="M1199 837l315-167-4 64-320 168z" fill="#b47434" />
            <path d="M931 710c18-10 46-3 54 13l15 31-10 119c-20-16-52-16-74-2z" fill="url(#gcol)" />
            <path d="M1024 797c22 38 60 44 92 26l-6 71c-30 18-70 14-94-5z" fill="url(#gcol2)" />
            <path d="M1120 822c24-4 40 4 60 16l-6 63c-18-8-40-12-60-8z" fill="url(#gcol)" />
            <path d="M1180 838c5 4 12 4 17-1l-7 65c-5 4-12 3-16-1z" fill="#7b4d21" />

            <ellipse v-for="(h, i) in holes" :key="'h' + i" :cx="h.x" :cy="h.y" :rx="h.rx" :ry="h.ry" :transform="`rotate(${h.a} ${h.x} ${h.y})`" fill="url(#gh)" />
            <g clip-path="url(#cbig)">
              <ellipse cx="911" cy="536" rx="65" ry="36" transform="rotate(6 911 536)" fill="url(#gh)" />
              <ellipse cx="907" cy="578" rx="65" ry="37" transform="rotate(6 907 578)" fill="#ffd35e" />
              <ellipse cx="907" cy="578" rx="32" ry="18" transform="rotate(6 907 578)" fill="#8a5927" />
            </g>
            <ellipse cx="911" cy="536" rx="65" ry="36" transform="rotate(6 911 536)" fill="none" />

            <path d="M953 411l35-20q9-3 17 0l36 21q2 4-1 7l-32 18-15-4-38-16z" fill="#9c642d" />
            <path d="M988 392h17l-1 43-10-3z" fill="#7b4d21" stroke="none" />
            <path d="M955 418l-3 42M1040 419l-3 44M988 392l-2 85M1006 393l-2 84M950 456v5l45 22 42-20M990 420l-2 52M994 418v55" fill="none" />

            <path d="M1077 433c4-22 58-22 63 4l-3 42c-4-20-50-26-61-10z" fill="url(#gh)" />
            <path d="M1138 478l4 60 1-40-3-60" fill="#7b4d21" />
            <path d="M1077 433l-5 44 3 93c4 30 62 32 65 4l3-60-3-78M1078 467l-1 100M1080 533c6 22 50 24 62 8" fill="none" />

            <ellipse cx="1240" cy="469" rx="58" ry="34" transform="rotate(6 1240 469)" fill="url(#gcone)" />
            <ellipse cx="1237" cy="497" rx="25" ry="14" fill="none" />
            <ellipse cx="1237" cy="491" rx="23" ry="10" transform="rotate(6 1237 491)" fill="url(#gh)" />

            <g v-for="(b, i) in bores" :key="'b' + i" :transform="`translate(${b.x} ${b.y})`">
              <ellipse cx="715" cy="663" rx="40" ry="66" transform="rotate(-29 715 663)" fill="url(#gbore)" />
              <g clip-path="url(#cbore)">
                <ellipse cx="751" cy="643" rx="40" ry="66" transform="rotate(-29 751 643)" fill="#a1682e" />
                <path d="M703 640l36-19q14 6 20 24 5 12 6 22l-37 19z" fill="url(#gpin)" stroke="none" />
              </g>
              <ellipse cx="715" cy="663" rx="40" ry="66" transform="rotate(-29 715 663)" fill="none" />
              <ellipse cx="715" cy="663" rx="16" ry="26" transform="rotate(-29 715 663)" fill="#a1682e" />
            </g>
            <ellipse v-for="(r, i) in rings" :key="'r' + i" :cx="r.x" :cy="r.y" :rx="r.rx" :ry="r.ry" :transform="`rotate(${r.a} ${r.x} ${r.y})`" fill="none" />

            <path d="M898 374l-5 53 97-9M893 427L625 568M990 420L654 597M988 428L655 606M963 483L650 651M884 534L614 677M1171 346l-16 161-272 27 6-52 99-11M1155 507l257 156-34 20 61 39 36-19 34 22" fill="none" />
            <path d="M1323 483c2 77 22 137 55 200M1361 515c4 65 34 155 78 207M1362 520c8 60 23 100 50 143M1397 505c5 65 33 145 78 198M632 525l-4 52M622 632l-5 46" fill="none" />
          </g>
          <g class="axis"><path d="M640 532l14 7-6 1z" fill="#d02a20" /><text x="646" y="559" fill="#d8362c">XC</text></g>
        </svg>
        <span class="badge six">6</span>

        <form class="dialog" @submit.prevent>
          <div class="dhead">
            <svg viewBox="0 0 16 16"><circle cx="8" cy="8" r="5" fill="none" stroke="#fff" stroke-width="2.400" /><circle cx="8" cy="8" r="1.300" fill="#fff" /><path d="M8 0v3M8 13v3M0 8h3M13 8h3M2.500 2.500l2 2M11.500 11.500l2 2M13.500 2.500l-2 2M4.500 11.500l-2 2" stroke="#fff" stroke-width="2" /></svg>
            <h2>移除参数</h2>
            <button aria-label="重置"><svg viewBox="0 0 14 14"><path d="M8 2a5 5 0 11-6 6" fill="none" stroke="#fff" stroke-width="2" /><path d="M1 2h6v5z" fill="#fff" /></svg></button>
            <button aria-label="关闭对话框"><svg viewBox="0 0 12 12"><path d="M1 1l10 10M11 1L1 11" stroke="#fff" stroke-width="2.200" /></svg></button>
          </div>
          <div class="dpanel">
            <div class="dsec">对象<svg viewBox="0 0 12 10"><path d="M1 9l5-7 5 7" fill="none" stroke="#2f7fb0" stroke-width="2.200" /></svg></div>
            <div class="pick">
              <div class="sel"><svg viewBox="0 0 12 12"><path d="M0 7l3-1 2 2 5-8 2 1-6 11H4z" fill="#25c42c" stroke="#128a18" stroke-width=".7" /></svg>选择对象 (1)</div>
              <button aria-label="选择对象"><svg viewBox="0 0 20 20"><circle cx="10" cy="10" r="5.500" fill="none" stroke="#d8280c" stroke-width="1.600" /><path d="M10 0v20M0 10h20" stroke="#111" stroke-width="1.200" /></svg></button>
              <i class="frame fa"></i><span class="badge five">5</span>
            </div>
          </div>
          <div class="dbtns"><button class="ok">确定</button><button>应用</button><button>取消</button><i class="frame fb"></i></div>
          <span class="badge seven">7</span>
        </form>
      </section>
    </main>

    <footer class="status">选择要移除参数的体、曲线或点</footer>

    <div class="ime">
      <svg class="pet" viewBox="0 0 50 50"><circle cx="25" cy="25" r="23.500" fill="#fff" stroke="#3a8ee6" stroke-width="2" /><path d="M12 12q0-6 4-5l5 5q5-1 10 0l6-5q6 0 5 6l-3 6q3 6 0 12-3 5-6 6l2 8H14l1-8q-6-4-7-12 0-6 4-9z" fill="#edf1df" stroke="#8a8f86" /><path d="M13 13q0-4 3-3l2 4-4 4zM40 12q-3-3-5 0l-1 3 4 3z" fill="#f2a5b8" /><ellipse cx="17" cy="21" rx="4" ry="5" fill="#111" /><ellipse cx="33" cy="24" rx="4" ry="5" fill="#111" /><circle cx="18" cy="19" r="1.500" fill="#fff" /><circle cx="34" cy="22" r="1.500" fill="#fff" /><path d="M20 29q2 2 4 0 2 3 4 1" fill="none" stroke="#555" /><path d="M15 38l3-2 1 4zM27 39l3-3 1 4z" fill="#c98a7a" /><path d="M14 44h20l-3 4H17z" fill="#222" /></svg>
      <svg class="level" viewBox="0 0 108 16">
        <path d="M4 1h10l4 5-9 9-9-9z" fill="#f8b878" stroke="#d0741e" /><path d="M5 5l4 5 4-5" fill="none" stroke="#b83c10" stroke-width="2" />
        <g v-for="n in 3" :key="n" :transform="`translate(${12 + n * 15} 8)`"><circle r="5.500" fill="none" stroke="#f0961c" stroke-width="2" stroke-dasharray="3 1" /><circle r="4.500" fill="#fbd05c" stroke="#e0821c" /><path d="M-3-1h6M-2 2h4" stroke="#b8600c" /></g>
        <path v-for="n in 3" :key="'m' + n" d="M-2-6q-1 7 7 8-2 4-6 3-7-3-1-11z" :transform="`translate(${56 + n * 15} 8)`" fill="#fbd05c" stroke="#e0821c" stroke-width=".9" />
      </svg>
      <div class="imebar">
        <span>中</span>
        <svg viewBox="0 0 16 16"><path d="M11 1q4 12-9 11 6 5 11 0 4-6-2-11z" fill="#2b86ea" /></svg>
        <svg viewBox="0 0 16 16"><circle cx="4" cy="8" r="2" fill="none" stroke="#2b86ea" stroke-width="1.300" /><path d="M10 6h3v4l-2 3v-3h-1z" fill="#2b86ea" /></svg>
        <svg viewBox="0 0 16 16"><path d="M1 13l7-6q0-5 5-5l-2 3 2 2 3-2q0 5-6 5l-6 6q-3 0-3-3z" fill="#2b86ea" /></svg>
        <svg viewBox="0 0 16 16"><circle cx="8" cy="8" r="6.500" fill="none" stroke="#2b86ea" stroke-width="1.600" /><path d="M5 5v2M11 5v2M4.500 9.500q3.500 4 7 0" fill="none" stroke="#2b86ea" stroke-width="1.500" /></svg>
        <svg viewBox="0 0 16 16"><path d="M5 2q3 2 6 0l5 3-2 3-2-1v8H4V7L2 8 0 5z" fill="#2b86ea" /></svg>
        <svg viewBox="0 0 16 16"><path d="M2 2h6v6H2zM9 2h6v6H9zM2 9h6v6H2zM9 9h6v6H9z" fill="#2b86ea" /></svg>
        <svg viewBox="0 0 16 16"><path d="M4.500 7.500h7v7h-7zM6 7V3q2-2 4 0v4M8 10v2" fill="none" stroke="#2b86ea" /></svg>
      </div>
    </div>

    <div v-for="m in menus" :key="m.name" class="menu" :class="m.name" role="menu" :aria-label="m.label">
      <template v-for="(it, i) in m.items" :key="i">
        <hr v-if="!it.text" />
        <button v-else role="menuitem" :class="{ off: it.off, active: it.active }">
          <svg v-if="it.icon" class="mi"><use :href="'#' + it.icon" /></svg>
          <span>{{ it.text }}<template v-if="it.hotkey">(<u>{{ it.hotkey }}</u>)</template>{{ it.tail }}</span>
          <kbd v-if="it.keys">{{ it.keys }}</kbd>
          <i v-if="it.sub" class="arr"></i>
        </button>
      </template>
    </div>

    <i v-for="(f, i) in frames" :key="'f' + i" class="frame" :class="{ deep: i < 3 }" :style="{ left: f.x + 'px', top: f.y + 'px', width: f.w + 'px', height: f.h + 'px' }"></i>
    <span v-for="b in badges" :key="b.n" class="badge" :style="{ left: b.x - 20 + 'px', top: b.y - 20 + 'px' }">{{ b.n }}</span>
  </div>
</template>

<style>
body { margin: 0; overflow: hidden; }
</style>

<style scoped>
* { box-sizing: border-box; }
.app { position: relative; display: flex; flex-direction: column; height: 100vh; overflow: hidden; background: #fff; color: #1c1c1c; font: 11px/16px "Open Sans", "Noto Sans CJK SC", sans-serif; }
button, input, select { font: inherit; color: inherit; padding: 0; margin: 0; border: 0; background: none; }
button { white-space: nowrap; }
svg { display: block; flex: none; width: 16px; height: 16px; }
.defs { position: absolute; width: 0; height: 0; }
.dim { filter: grayscale(1); opacity: .6; }
.sep { flex: none; width: 1px; align-self: stretch; background: #d5d5d5; }
.tri { flex: none; width: 0; height: 0; border: 3px solid transparent; border-top: 4px solid #111; border-bottom: 0; }
.ib { flex: none; display: flex; align-items: center; justify-content: center; width: 24px; height: 22px; }

.title { display: flex; align-items: center; height: 26px; flex: none; padding-right: 6px; }
.title .sep { height: 20px; align-self: center; margin: 0 2px; }
.title .tri { margin: 0 3px; }
.nx { width: 38px; padding-left: 3px; font: bold 20px/24px "Liberation Sans", sans-serif; color: #8397a8; }
.title .wide { width: 28px; }
.winbtn { display: flex; align-items: center; margin-left: 2px; }
.winbtn svg { margin-right: 4px; }
.title .bar { position: relative; margin-left: 2px; }
.title .bar::before { content: ""; position: absolute; left: -3px; top: -7px; width: 6px; height: 1px; background: #111; }
.title h1 { flex: 1; margin: 0; text-align: center; font-size: 13px; line-height: 24px; font-weight: 400; color: #000; }
.brand { font: bold 13px/24px "Open Sans", sans-serif; font-weight: 800; color: #0a9595; margin-right: 26px; }
.winctl { display: flex; align-items: center; gap: 12px; color: #111; }
.winctl.gray { color: #555; }
.winctl button { width: 12px; height: 14px; display: flex; align-items: center; justify-content: center; }
.min { width: 8px; height: 2px; margin-top: 9px; background: currentColor; }
.rs { width: 13px; height: 11px; }
.cl { width: 12px; height: 12px; }
.peek { position: absolute; left: 1147px; top: -6px; width: 282px; height: 6px; box-shadow: 0 0 4px 2px #999; }

.tabs { display: flex; align-items: stretch; flex: none; height: 28px; padding-right: 8px; background: #c8d8d6; font-size: 13px; }
.file { width: 81px; margin-right: 2px; background: #5b8a82; color: #fff; }
.tab { padding: 0 13px; }
.tab.on { background: #fff; border-top: 1px solid #9aa8a6; color: #2780a8; }
.search { display: flex; align-items: center; width: 125px; height: 20px; margin: 4px 6px 0 auto; padding: 0 2px; border: 1px solid #a3a8a7; background: #fff; font-size: 11px; }
.search input { flex: 1; min-width: 0; outline: 0; }
.search input::placeholder { color: #a5a5a5; opacity: 1; }
.tabs .ib { height: 28px; width: 26px; }
.help { font: bold 11px/14px "Open Sans", sans-serif; color: #fff; background: radial-gradient(circle at 50% 50%, #4a6fc4 0 7px, transparent 7px); }
.tabs .winctl { margin-left: 2px; gap: 10px; }

.ribbon { display: flex; flex: none; height: 94px; padding: 5px 5px 4px 0; border-bottom: 1px solid #d9d9d9; }
.group { display: flex; flex-direction: column; border-right: 1px solid #d5d5d5; }
.body { display: flex; height: 68px; }
.g1 { width: 188px; } .g2 { width: 180px; } .g3 { width: 226px; } .g4 { width: 158px; } .g5 { width: 44px; } .g6 { width: 55px; } .g7 { width: 43px; }
.g1 .body { padding-left: 13px; gap: 8px; }
.g2 .body, .g3 .body { padding-left: 8px; }
.g4 .body { padding-left: 12px; gap: 10px; }
.g1 .big { width: 52px; }
.g2 .big { width: 40px; }
.g3 .big { width: 52px; }
.rows { display: flex; flex-direction: column; margin-top: -4px; }
.rows button { display: flex; align-items: center; gap: 3px; height: 22px; line-height: 16px; }
.g2 .rows { padding-left: 6px; }
.g3 .rows { padding-left: 6px; }
.big { display: flex; flex-direction: column; align-items: center; }
.big svg { width: 30px; height: 30px; margin: 1px 0 5px; }
.big .tri { margin-top: 4px; }
.off { color: #a3a3a3; }
.more span { width: 32px; height: 34px; margin-bottom: 2px; border: 1px solid #e4e4e4; border-radius: 2px; display: grid; place-items: center; }
.more svg { width: 14px; height: 14px; margin: 0; }
.cap { position: relative; text-align: center; line-height: 16px; padding: 3px 18px 0 0; color: #2f83ac; }
.g4 .cap { padding-right: 22px; }
.cap .tri { position: absolute; right: 8px; top: 10px; }
.end { margin-left: auto; align-self: flex-end; }
.ribbon .end { margin-bottom: 4px; }

.tools { display: flex; align-items: center; flex: none; height: 32px; gap: 1px; padding: 0 5px 0 6px; border-bottom: 1px solid #858f8d; }
.menubtn { display: flex; align-items: center; gap: 4px; width: 77px; height: 24px; padding-left: 4px; margin-right: 15px; border: 1px solid #e8cf8a; background: #fdf4d4; }
.menubtn .tri { margin-left: 1px; }
.tools select { appearance: none; height: 21px; padding: 0 3px; border: 1px solid #a5a5a5; background: #fff; background-image: linear-gradient(45deg, transparent 50%, #111 50%), linear-gradient(-45deg, transparent 50%, #111 50%); background-size: 4px 4px; background-position: right 9px top 8px, right 5px top 8px; background-repeat: no-repeat; }
.s1 { width: 134px; margin-right: 6px; }
.s2 { width: 141px; margin-right: 4px; }
.tools .tri { margin: 0 2px; }
.tools .sep { height: 23px; align-self: center; margin: 0 6px; }
.tools .end { margin: 0 0 7px auto; }
.press { background: #c9dbd9; border: 1px solid #9fb4b1; }

.work { display: flex; flex: 1; min-height: 0; }
.rail { position: relative; flex: none; width: 32px; background: #dcdcdc; border-right: 1px solid #a5a5a5; }
.railtab { position: absolute; left: 2px; top: 124px; width: 30px; height: 46px; background: #fff; border: 1px solid #aaa; border-right: 0; }
.sliver { position: absolute; left: 6px; width: 3px; height: 16px; top: 183px; background: #c07040; }
.sliver.b { top: 243px; height: 7px; background: #3a5ca8; }
.railicons { display: flex; flex-direction: column; gap: 18px; padding: 339px 0 0 6px; }
.railicons svg { width: 24px; height: 24px; }
.nav { display: flex; flex-direction: column; flex: none; width: 332px; border-right: 1px solid #8a8a8a; padding: 0 0 6px 6px; }
.navtop { height: 28px; flex: none; padding: 10px 16px 0 0; }
.pin { display: block; margin-left: auto; width: 13px; height: 11px; border: 1px solid #111; border-top-width: 2px; }
.grid { display: flex; flex-direction: column; flex: 1; min-height: 0; margin-right: 9px; border: 1px solid #c5c5c5; border-right-color: #ddd; }
.ghead { flex: none; height: 22px; background: #f0f0f0; border-bottom: 1px solid #ddd; display: flex; justify-content: flex-end; }
.ghead span { width: 14px; padding-left: 6px; line-height: 22px; border-left: 1px solid #ccc; overflow: hidden; }
.grows { flex: 1; min-height: 0; background: linear-gradient(#e4e4e4, #e4e4e4) no-repeat right 13px top / 1px 100%, repeating-linear-gradient(#fff 0 19px, #e8e8e8 19px 20px, #f8f8f8 20px 39px, #e8e8e8 39px 40px); }
.hscroll { display: flex; height: 16px; flex: none; background: #f0f0f0; }
.hscroll b { width: 18px; text-align: center; font: bold 18px/12px "Open Sans", sans-serif; color: #444; }
.hscroll i { flex: 1; background: #c6c6c6; }
.split { height: 5px; flex: none; margin-bottom: 2px; background: #cfcfcf; border: 1px solid #a8a8a8; border-right: 0; }
.fold { flex: none; height: 24px; padding: 3px 0 0 7px; text-align: left; font-size: 14px; line-height: 20px; color: #3a82a6; border-bottom: 2px solid #cfcfcf; }

.view { position: relative; flex: 1; min-width: 0; overflow: hidden; background: linear-gradient(#b4b6b8, #e5e7e9 72%, #e6e7e9); border-bottom: 1px solid #999; }
.model { position: absolute; left: 236px; top: 150px; width: 940px; height: 600px; }
.axis text { font: 12px "Open Sans", sans-serif; }

.status { flex: none; height: 16px; padding-left: 3px; line-height: 18px; color: #000; }

.dialog { position: absolute; right: 71px; top: 84px; width: 328px; background: #e8e8e8; border: 1px solid #c3c3c3; border-top: 0; }
.dhead { display: flex; align-items: center; gap: 8px; height: 24px; margin: 0 -1px; padding: 0 9px 0 7px; background: #5b8a82; color: #fff; }
.dhead h2 { flex: 1; margin: 0; padding-left: 1px; font-size: 13px; font-weight: 400; }
.dhead button svg { width: 12px; height: 12px; }
.dpanel { margin: 4px 5px 0; height: 71px; background: #fff; border-bottom: 1px solid #c9c9c9; }
.dsec { display: flex; align-items: center; justify-content: space-between; height: 30px; padding: 0 6px 4px 7px; font-size: 14px; color: #3a8ab8; }
.dsec svg { width: 12px; height: 10px; }
.pick { position: relative; display: flex; gap: 2px; padding: 0 9px; }
.sel { flex: 1; display: flex; align-items: center; gap: 5px; height: 32px; padding-left: 2px; background: #fcd66e; font-size: 12px; }
.sel svg { width: 13px; height: 13px; }
.pick button { width: 32px; height: 32px; border: 1px solid #efd184; background: #fcebb0; display: grid; place-items: center; }
.pick button svg { width: 20px; height: 20px; }
.dbtns { position: relative; display: flex; justify-content: flex-end; gap: 5px; padding: 26px 15px 9px; font-size: 12px; }
.dbtns button { width: 54px; height: 25px; background: #c9cbcf; border: 1px solid #aaa; }
.dbtns .ok { background: #9bcde6; border-color: #4a96bd; }

.frame { position: absolute; border: 2px solid #e01212; box-shadow: 0 0 2px rgba(160, 0, 0, .35); pointer-events: none; }
.deep { border-color: #c01818; }
.fa { left: -2px; top: 0; width: 125px; height: 30px; }
.fb { right: 127px; top: 19px; width: 76px; height: 38px; }
.badge { position: absolute; width: 40px; height: 40px; border-radius: 50%; background: #f8403f; box-shadow: 0 0 0 1px rgba(255, 235, 225, .8); color: #fff; text-align: center; font-size: 16px; line-height: 39px; }
.six { left: 717px; top: 318px; }
.five { left: 162px; top: -10px; }
.seven { left: 144px; top: 168px; }

.menu { position: absolute; display: flex; flex-direction: column; padding: 2px; background: #fff; border: 1px solid #a8a8a8; box-shadow: 3px 4px 3px rgba(0, 0, 0, .42); }
.menu button { position: relative; display: flex; align-items: center; flex: none; height: 22px; padding-left: 26px; text-align: left; border: 1px solid transparent; }
.menu .active { background: #fdf4d4; border-color: #ecd283; }
.menu hr { flex: none; width: auto; height: 1px; margin: 4px 10px; border: 0; background: #d5d5d5; }
.mi { position: absolute; left: 2px; top: 2px; }
.off .mi { filter: grayscale(.7); opacity: .6; }
kbd { font: inherit; margin-left: auto; padding-right: 16px; }
.arr { position: absolute; right: 3px; top: 6px; border: 4px solid transparent; border-left: 4px solid #111; border-right: 0; }
.main { left: 7px; top: 175px; width: 140px; }
.edit { left: 144px; top: 200px; width: 169px; }
.edit .active .arr { border-left-color: #2f7fa8; }
.feature { left: 310px; top: 633px; width: 178px; }

.ime { position: absolute; right: 0; bottom: 0; width: 226px; height: 46px; }
.pet { position: absolute; left: 0; top: 0; width: 50px; height: 50px; z-index: 1; }
.level { position: absolute; left: 54px; top: 4px; width: 108px; height: 16px; }
.imebar { position: absolute; left: 32px; right: 0; top: 23px; height: 26px; display: flex; justify-content: space-between; align-items: flex-start; padding: 6px 4px 0 24px; background: #fff; border: 1px solid #3a8ee6; border-radius: 0 14px 0 0; }
.imebar span { font-size: 13px; font-weight: 700; color: #2b86ea; }
</style>
